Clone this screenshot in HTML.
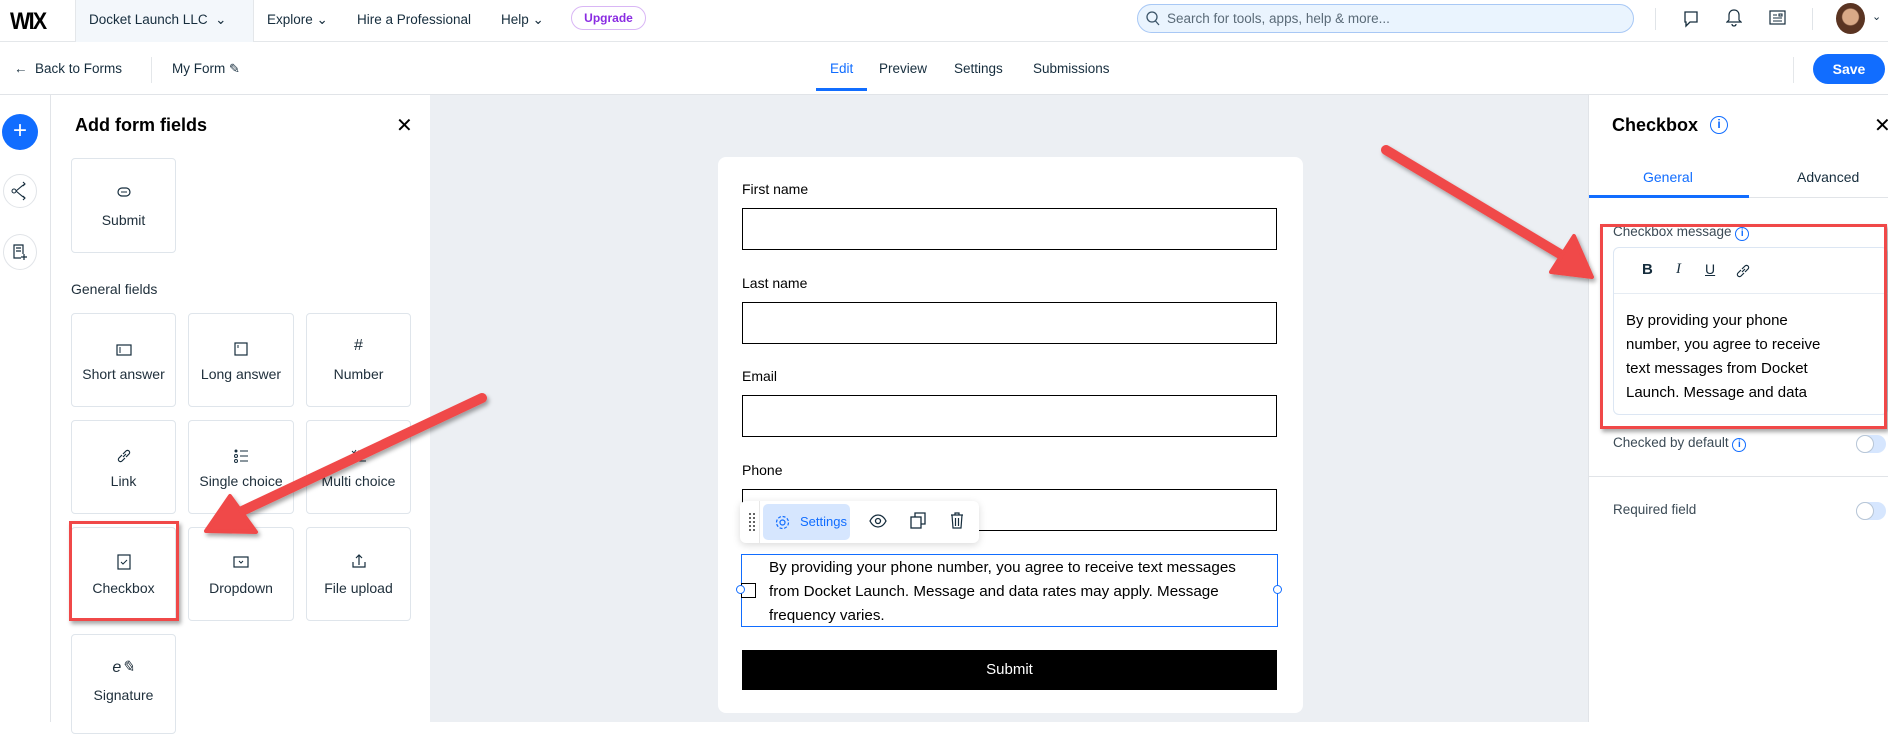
<!DOCTYPE html>
<html><head><meta charset="utf-8"><style>
*{box-sizing:border-box;margin:0;padding:0}
body{width:1888px;height:722px;overflow:hidden;position:relative;background:#fff;font-family:"Liberation Sans",sans-serif;color:#162d3d;font-size:14px}
.a{position:absolute}
.t{position:absolute;white-space:nowrap}
.card{position:absolute;border:1px solid #dfe5eb;border-radius:4px;background:#fff;text-align:center;font-size:14px;color:#20303c}
.card span{position:absolute;left:0;right:0;bottom:24px}
.card svg{position:absolute;left:50%;top:26px;transform:translateX(-50%)}
.inp{position:absolute;left:742px;width:535px;height:42px;border:1.5px solid #000;background:#fff}
.lbl{position:absolute;left:742px;font-size:14px;color:#000}
</style></head><body>
<!-- top bar -->
<div class="a" style="left:0;top:0;width:1888px;height:42px;border-bottom:1px solid #e4e7ea;background:#fff"></div>
<div class="t" style="left:10px;top:8px;font-size:24px;font-weight:bold;color:#000;letter-spacing:-2px;transform:scaleX(.9);transform-origin:left">WIX</div>
<div class="a" style="left:75px;top:0;width:179px;height:42px;background:#f3f7fb;border-left:1px solid #e4e7ea;border-right:1px solid #e4e7ea"></div>
<div class="t" style="left:89px;top:12px;font-size:13.5px">Docket Launch LLC &nbsp;⌄</div>
<div class="t" style="left:267px;top:12px;font-size:13.5px">Explore ⌄</div>
<div class="t" style="left:357px;top:12px;font-size:13.5px">Hire a Professional</div>
<div class="t" style="left:501px;top:12px;font-size:13.5px">Help ⌄</div>
<div class="a" style="left:571px;top:6px;width:75px;height:24px;border:1px solid #d9b6f5;border-radius:12px;color:#8a2be2;font-size:12px;font-weight:bold;text-align:center;line-height:22px">Upgrade</div>
<div class="a" style="left:1137px;top:4px;width:497px;height:29px;border:1px solid #a8c8f5;border-radius:15px;background:#eaf4fe"></div>
<svg class="a" style="left:1146px;top:11px" width="14" height="16"><circle cx="6" cy="6" r="5" fill="none" stroke="#3b5468" stroke-width="1.3"/><line x1="9.5" y1="10" x2="13" y2="14" stroke="#3b5468" stroke-width="1.3"/></svg>
<div class="t" style="left:1167px;top:11px;font-size:13.5px;color:#5b6b78">Search for tools, apps, help &amp; more...</div>
<div class="a" style="left:1655px;top:8px;width:1px;height:22px;background:#e0e4e8"></div>
<svg class="a" style="left:1683px;top:10px" width="16" height="18"><path d="M2 2h12v10H7l-4 4v-4H2z" fill="none" stroke="#162d3d" stroke-width="1.3"/></svg>
<svg class="a" style="left:1726px;top:8px" width="16" height="20"><path d="M8 2c-3 0-5 2-5 5v5l-2 2h14l-2-2V7c0-3-2-5-5-5zM6 16c0 1.5 1 2 2 2s2-.5 2-2" fill="none" stroke="#162d3d" stroke-width="1.2"/></svg>
<svg class="a" style="left:1769px;top:10px" width="18" height="16"><rect x="1" y="1" width="15" height="13" fill="none" stroke="#162d3d" stroke-width="1.2"/><path d="M4 5h4M4 8h9M4 11h9M10 4h3v2h-3z" stroke="#162d3d" stroke-width="1.1" fill="none"/></svg>
<div class="a" style="left:1812px;top:8px;width:1px;height:22px;background:#e0e4e8"></div>
<div class="a" style="left:1836px;top:3px;width:29px;height:31px;border-radius:50%;background:radial-gradient(circle at 50% 45%,#d9a987 0 35%,#5a3422 40%)"></div>
<div class="t" style="left:1872px;top:10px;font-size:11px">⌄</div>
<!-- second bar -->
<div class="a" style="left:0;top:94px;width:1888px;height:1px;background:#e1e4e8"></div>
<div class="t" style="left:14px;top:61px;font-size:13.5px">←&nbsp; Back to Forms</div>
<div class="a" style="left:151px;top:57px;width:1px;height:26px;background:#e4e7ea"></div>
<div class="t" style="left:172px;top:61px;font-size:13.5px">My Form <span style="font-size:13px">✎</span></div>
<div class="t" style="left:830px;top:61px;font-size:13.5px;color:#116dff">Edit</div>
<div class="a" style="left:816px;top:88px;width:51px;height:3px;background:#116dff"></div>
<div class="t" style="left:879px;top:61px;font-size:13.5px">Preview</div>
<div class="t" style="left:954px;top:61px;font-size:13.5px">Settings</div>
<div class="t" style="left:1033px;top:61px;font-size:13.5px">Submissions</div>
<div class="a" style="left:1793px;top:57px;width:1px;height:26px;background:#e4e7ea"></div>
<div class="a" style="left:1813px;top:54px;width:72px;height:30px;border-radius:15px;background:#116dff;color:#fff;font-weight:bold;font-size:14px;text-align:center;line-height:30px">Save</div>
<!-- left rail -->
<div class="a" style="left:50px;top:95px;width:1px;height:627px;background:#e1e4e8"></div>
<div class="a" style="left:2px;top:114px;width:36px;height:36px;border-radius:50%;background:#116dff;color:#fff;font-size:24px;text-align:center;line-height:34px">+</div>
<div class="a" style="left:3px;top:174px;width:34px;height:34px;border-radius:50%;border:1px solid #e1e4e8"></div>
<svg class="a" style="left:10px;top:181px" width="20" height="20"><circle cx="4" cy="10" r="2" fill="none" stroke="#162d3d"/><path d="M6 10l6-5 3-2M6 10l6 5 3 2M13 1l2 2-2 2M13 15l2 2-2 2" fill="none" stroke="#162d3d" stroke-width="1.1"/></svg>
<div class="a" style="left:3px;top:234px;width:34px;height:36px;border-radius:50%;border:1px solid #e1e4e8"></div>
<svg class="a" style="left:12px;top:243px" width="16" height="18"><path d="M9 15H2V2h9v9M4 5h5M4 8h5M12 11v6M9 14h6" fill="none" stroke="#162d3d" stroke-width="1.2"/></svg>
<!-- add panel -->
<div class="t" style="left:75px;top:115px;font-size:18px;font-weight:bold;color:#000">Add form fields</div>
<div class="t" style="left:396px;top:113px;font-size:20px;color:#000">✕</div>
<div class="card" style="left:71px;top:158px;width:105px;height:95px"><svg width="14" height="10" style="top:28px"><rect x="1" y="1" width="12" height="8" rx="4" fill="none" stroke="#162d3d" stroke-width="1.2"/><line x1="4" y1="5" x2="10" y2="5" stroke="#162d3d"/></svg><span>Submit</span></div>
<div class="t" style="left:71px;top:281px;font-size:14px;color:#20303c">General fields</div>
<div class="card" style="left:71px;top:313px;width:105px;height:94px"><svg width="16" height="12" style="top:30px"><rect x="1" y="1" width="14" height="10" fill="none" stroke="#162d3d" stroke-width="1.2"/><line x1="4" y1="3" x2="4" y2="9" stroke="#162d3d"/></svg><span>Short answer</span></div>
<div class="card" style="left:188px;top:313px;width:106px;height:94px"><svg width="14" height="14" style="top:28px"><rect x="1" y="1" width="12" height="12" fill="none" stroke="#162d3d" stroke-width="1.2"/><line x1="4" y1="3" x2="4" y2="6" stroke="#162d3d"/></svg><span>Long answer</span></div>
<div class="card" style="left:306px;top:313px;width:105px;height:94px"><div class="a" style="left:0;right:0;top:23px;font-size:16px">#</div><span>Number</span></div>
<div class="card" style="left:71px;top:420px;width:105px;height:94px"><svg width="14" height="16" style="top:27px"><path d="M6 9l3-3M5 7L2 10a2 2 0 003 3l3-3M9 9l3-3a2 2 0 00-3-3L6 6" fill="none" stroke="#162d3d" stroke-width="1.2"/></svg><span>Link</span></div>
<div class="card" style="left:188px;top:420px;width:106px;height:94px"><svg width="16" height="16" style="top:27px"><circle cx="3" cy="3" r="1.5" fill="#162d3d"/><circle cx="3" cy="8" r="1.5" fill="none" stroke="#162d3d"/><circle cx="3" cy="13" r="1.5" fill="none" stroke="#162d3d"/><path d="M7 3h8M7 8h8M7 13h8" stroke="#162d3d"/></svg><span>Single choice</span></div>
<div class="card" style="left:306px;top:420px;width:105px;height:94px"><svg width="16" height="16" style="top:27px"><path d="M1 3l2 2 2-3M1 8l2 2 2-3M7 3h8M7 8h8M7 13h8" fill="none" stroke="#162d3d"/></svg><span>Multi choice</span></div>
<div class="card" style="left:71px;top:527px;width:105px;height:94px"><svg width="14" height="16" style="top:26px"><rect x="1" y="1" width="12" height="14" fill="none" stroke="#162d3d" stroke-width="1.2"/><path d="M4 8l2 2 4-4" fill="none" stroke="#162d3d"/></svg><span>Checkbox</span></div>
<div class="card" style="left:188px;top:527px;width:106px;height:94px"><svg width="16" height="12" style="top:28px"><rect x="1" y="1" width="14" height="10" fill="none" stroke="#162d3d" stroke-width="1.2"/><path d="M6 5l2 2 2-2" fill="none" stroke="#162d3d"/></svg><span>Dropdown</span></div>
<div class="card" style="left:306px;top:527px;width:105px;height:94px"><svg width="16" height="16" style="top:25px"><path d="M8 12V2M5 5l3-3 3 3M2 9v5h12V9" fill="none" stroke="#162d3d" stroke-width="1.2"/></svg><span>File upload</span></div>
<div class="card" style="left:71px;top:634px;width:105px;height:100px"><div class="a" style="left:0;right:0;top:22px;font-size:16px;font-style:italic">e✎</div><span style="bottom:30px">Signature</span></div>
<div class="a" style="left:69px;top:521px;width:110px;height:100px;border:3px solid #f04848;box-shadow:2px 3px 4px rgba(0,0,0,.35)"></div>
<!-- canvas -->
<div class="a" style="left:430px;top:95px;width:1158px;height:627px;background:#eceff3"></div>
<div class="a" style="left:718px;top:157px;width:585px;height:556px;background:#fff;border-radius:8px"></div>
<div class="lbl" style="top:181px">First name</div>
<div class="inp" style="top:208px"></div>
<div class="lbl" style="top:275px">Last name</div>
<div class="inp" style="top:302px"></div>
<div class="lbl" style="top:368px">Email</div>
<div class="inp" style="top:395px"></div>
<div class="lbl" style="top:462px">Phone</div>
<div class="inp" style="top:489px"></div>
<div class="a" style="left:740px;top:501px;width:239px;height:42px;background:#fff;border-radius:6px;box-shadow:0 2px 8px rgba(0,0,0,.15)"></div>
<svg class="a" style="left:748px;top:512px" width="8" height="20"><g fill="#333"><circle cx="2" cy="2" r="1"/><circle cx="6" cy="2" r="1"/><circle cx="2" cy="6" r="1"/><circle cx="6" cy="6" r="1"/><circle cx="2" cy="10" r="1"/><circle cx="6" cy="10" r="1"/><circle cx="2" cy="14" r="1"/><circle cx="6" cy="14" r="1"/><circle cx="2" cy="18" r="1"/><circle cx="6" cy="18" r="1"/></g></svg>
<div class="a" style="left:759px;top:501px;width:1px;height:42px;background:#e8e8e8"></div>
<div class="a" style="left:763px;top:504px;width:87px;height:36px;border-radius:5px;background:#d6e6fe"></div>
<svg class="a" style="left:774px;top:514px" width="17" height="17"><circle cx="8.5" cy="8.5" r="2.5" fill="none" stroke="#116dff" stroke-width="1.2"/><circle cx="8.5" cy="8.5" r="6" fill="none" stroke="#116dff" stroke-width="1.2" stroke-dasharray="3 1.7"/></svg>
<div class="t" style="left:800px;top:514px;font-size:13px;color:#116dff">Settings</div>
<svg class="a" style="left:869px;top:514px" width="18" height="14"><path d="M1 7c2-4 5-6 8-6s6 2 8 6c-2 4-5 6-8 6S3 11 1 7z" fill="none" stroke="#162d3d" stroke-width="1.3"/><circle cx="9" cy="7" r="2.5" fill="none" stroke="#162d3d" stroke-width="1.3"/></svg>
<svg class="a" style="left:910px;top:512px" width="16" height="17"><rect x="1" y="5" width="10" height="11" fill="none" stroke="#162d3d" stroke-width="1.3"/><path d="M5 5V1h10v11h-4" fill="none" stroke="#162d3d" stroke-width="1.3"/></svg>
<svg class="a" style="left:950px;top:512px" width="14" height="17"><path d="M1 3h12M5 3V1h4v2M2 3l1 13h8l1-13M5.5 6v8M8.5 6v8" fill="none" stroke="#162d3d" stroke-width="1.2"/></svg>
<div class="a" style="left:741px;top:554px;width:537px;height:73px;border:1.5px solid #116dff"></div>
<div class="a" style="left:741px;top:583px;width:15px;height:15px;border:1.3px solid #000"></div>
<div class="a" style="left:736px;top:585px;width:9px;height:9px;border-radius:50%;border:1.3px solid #116dff;background:#fff"></div>
<div class="a" style="left:1273px;top:585px;width:9px;height:9px;border-radius:50%;border:1.3px solid #116dff;background:#fff"></div>
<div class="a" style="left:769px;top:556px;width:500px;font-size:15.2px;line-height:24px;color:#000">By providing your phone number, you agree to receive text messages<br>from Docket Launch. Message and data rates may apply. Message<br>frequency varies.</div>
<div class="a" style="left:742px;top:650px;width:535px;height:40px;background:#000;color:#fff;text-align:center;line-height:40px;font-size:15px">Submit</div>
<!-- right panel -->
<div class="a" style="left:1588px;top:95px;width:300px;height:627px;background:#fff;border-left:1px solid #e1e4e8"></div>
<div class="t" style="left:1612px;top:115px;font-size:18px;font-weight:bold;color:#000">Checkbox</div>
<div class="a" style="left:1710px;top:116px;width:18px;height:18px;border-radius:50%;border:1.5px solid #116dff;color:#116dff;font-size:12px;font-weight:bold;text-align:center;line-height:15px">i</div>
<div class="t" style="left:1874px;top:113px;font-size:20px;color:#000">✕</div>
<div class="t" style="left:1643px;top:169px;font-size:14px;color:#116dff">General</div>
<div class="t" style="left:1797px;top:169px;font-size:14px;color:#162d3d">Advanced</div>
<div class="a" style="left:1588px;top:197px;width:300px;height:1px;background:#e1e4e8"></div>
<div class="a" style="left:1589px;top:195px;width:160px;height:3px;background:#116dff"></div>
<div class="t" style="left:1613px;top:224px;font-size:13.5px;color:#3b4a55">Checkbox message <span style="display:inline-block;width:14px;height:14px;border:1.3px solid #116dff;border-radius:50%;color:#116dff;font-size:10px;font-weight:bold;text-align:center;line-height:12px">i</span></div>
<div class="a" style="left:1613px;top:247px;width:275px;height:168px;border:1px solid #dce6f3;border-radius:6px"></div>
<div class="a" style="left:1614px;top:293px;width:274px;height:1px;background:#e6ecf3"></div>
<div class="t" style="left:1642px;top:261px;font-size:15px;font-weight:bold">B</div>
<div class="t" style="left:1676px;top:261px;font-size:15px;font-style:italic;font-family:'Liberation Serif',serif">I</div>
<div class="t" style="left:1705px;top:261px;font-size:14px;text-decoration:underline">U</div>
<svg class="a" style="left:1736px;top:263px" width="14" height="16"><path d="M6 9l3-3M5 7L2 10a2 2 0 003 3l3-3M9 9l3-3a2 2 0 00-3-3L6 6" fill="none" stroke="#162d3d" stroke-width="1.2"/></svg>
<div class="a" style="left:1626px;top:309px;width:250px;font-size:15px;line-height:24px;color:#000">By providing your phone<br>number, you agree to receive<br>text messages from Docket<br>Launch. Message and data</div>
<div class="a" style="left:1600px;top:224px;width:287px;height:205px;border:3px solid #f04848;box-shadow:2px 3px 4px rgba(0,0,0,.35)"></div>
<div class="t" style="left:1613px;top:435px;font-size:13.5px;color:#3b4a55">Checked by default <span style="display:inline-block;width:14px;height:14px;border:1.3px solid #116dff;border-radius:50%;color:#116dff;font-size:10px;font-weight:bold;text-align:center;line-height:12px">i</span></div>
<div class="a" style="left:1856px;top:435px;width:30px;height:18px;border-radius:9px;background:#d6e6fe"></div>
<div class="a" style="left:1856px;top:435px;width:18px;height:18px;border-radius:50%;background:#fff;border:1px solid #b8c6d6"></div>
<div class="a" style="left:1588px;top:476px;width:300px;height:1px;background:#e1e4e8"></div>
<div class="t" style="left:1613px;top:502px;font-size:13.5px;color:#3b4a55">Required field</div>
<div class="a" style="left:1856px;top:502px;width:30px;height:18px;border-radius:9px;background:#d6e6fe"></div>
<div class="a" style="left:1856px;top:502px;width:18px;height:18px;border-radius:50%;background:#fff;border:1px solid #b8c6d6"></div>
<!-- arrows -->
<svg class="a" style="left:0;top:0" width="1888" height="722">
<defs><filter id="sh"><feDropShadow dx="2" dy="3" stdDeviation="2" flood-color="#000" flood-opacity=".35"/></filter></defs>
<g filter="url(#sh)" fill="#f04848" stroke="#f04848">
<line x1="482" y1="398" x2="240" y2="512" stroke-width="10" stroke-linecap="round"/>
<polygon points="206,531 230,496 256,532" stroke-width="4" stroke-linejoin="round"/>
<line x1="1386" y1="150" x2="1560" y2="254" stroke-width="10" stroke-linecap="round"/>
<polygon points="1592,277 1551,272 1574,236" stroke-width="4" stroke-linejoin="round"/>
</g></svg>
</body></html>
